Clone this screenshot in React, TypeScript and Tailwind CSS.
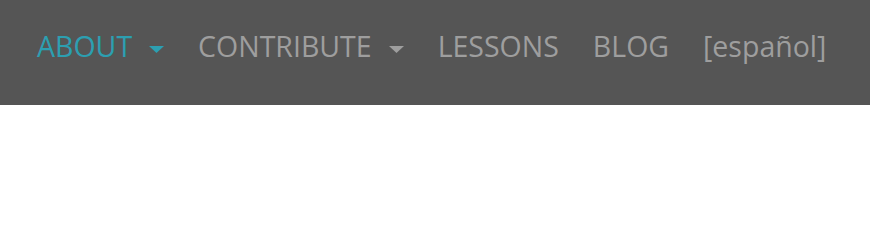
export default function App() {
  const items = [
    { label: "ABOUT", caret: true, active: true },
    { label: "CONTRIBUTE", caret: true },
    { label: "LESSONS" },
    { label: "BLOG" },
    { label: "[español]" },
  ];

  return (
    <div className="min-h-screen bg-white" style={{ fontFamily: '"Open Sans", sans-serif' }}>
      {/* top nav */}
      <nav className="h-[105px] bg-[#555555] pl-[37px] pt-[27px]">
        <ul className="flex items-start gap-[34px]">
          {items.map((item) => (
            <li
              key={item.label}
              className={`flex items-center gap-[17px] text-[28.5px] leading-[38px] ${
                item.active ? "text-[#2c9fb1]" : "text-[#9e9e9e]"
              }`}
            >
              <span>{item.label}</span>
              {item.caret && (
                <svg width="15" height="7" viewBox="0 0 15 7" className="mt-[7px]">
                  <path d="M0 0H15L7.5 7Z" fill="currentColor" />
                </svg>
              )}
            </li>
          ))}
        </ul>
      </nav>
    </div>
  );
}
